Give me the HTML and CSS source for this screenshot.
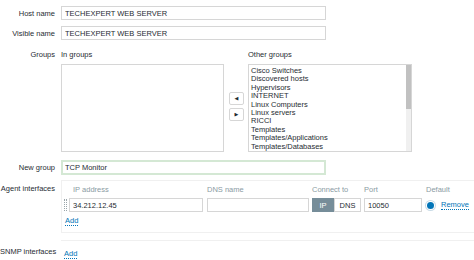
FILE: index.html
```html
<!DOCTYPE html>
<html lang="en">
<head>
    <meta charset="UTF-8">
    <title>Host</title>
    <link rel="stylesheet" href="styles.css">
</head>
<body>
    <div class="form">
        <div class="row first">
            <label class="label">Host name</label>
            <div class="field"><input class="text wide" type="text" value="TECHEXPERT WEB SERVER"></div>
        </div>
        <div class="row">
            <label class="label">Visible name</label>
            <div class="field"><input class="text wide" type="text" value="TECHEXPERT WEB SERVER"></div>
        </div>
        <div class="row groups-row">
            <label class="label top">Groups</label>
            <div class="field groups">
                <div class="group-col">
                    <div class="group-title">In groups</div>
                    <div class="listbox"></div>
                </div>
                <div class="move-btns">
                    <button class="move">&#9664;</button>
                    <button class="move">&#9654;</button>
                </div>
                <div class="group-col">
                    <div class="group-title">Other groups</div>
                    <div class="listbox list-other">
                        <ul class="items">
                            <li>Cisco Switches</li>
                            <li>Discovered hosts</li>
                            <li>Hypervisors</li>
                            <li>INTERNET</li>
                            <li>Linux Computers</li>
                            <li>Linux servers</li>
                            <li>RICCI</li>
                            <li>Templates</li>
                            <li>Templates/Applications</li>
                            <li>Templates/Databases</li>
                        </ul>
                        <div class="scrollbar"><div class="thumb"></div></div>
                    </div>
                </div>
            </div>
        </div>
        <div class="row new-group-row">
            <label class="label">New group</label>
            <div class="field"><input class="text wide focused" type="text" value="TCP Monitor"></div>
        </div>
        <div class="row agent-row">
            <label class="label top">Agent interfaces</label>
            <div class="field iface-box">
                <div class="iface-head">
                    <span class="c-handle"></span>
                    <span class="c-ip head-ip">IP address</span>
                    <span class="c-dns">DNS name</span>
                    <span class="c-conn">Connect to</span>
                    <span class="c-port">Port</span>
                    <span class="c-def">Default</span>
                </div>
                <div class="iface-line">
                    <span class="c-handle handle"></span>
                    <input class="text c-ip" type="text" value="34.212.12.45">
                    <input class="text c-dns" type="text" value="">
                    <span class="c-conn toggle">
                        <span class="seg on">IP</span><span class="seg">DNS</span>
                    </span>
                    <input class="text c-port" type="text" value="10050">
                    <span class="c-def default">
                        <span class="radio"></span>
                        <a class="link">Remove</a>
                    </span>
                </div>
                <a class="link add">Add</a>
            </div>
        </div>
        <div class="row snmp-row">
            <label class="label top">SNMP interfaces</label>
            <div class="field snmp-box">
                <a class="link add">Add</a>
            </div>
        </div>
    </div>
</body>
</html>
```

FILE: styles.css
```css
* {
    box-sizing: border-box;
}
body {
    margin: 0;
    background: #fff;
    font-family: "Liberation Sans", Arial, sans-serif;
    font-size: 7.5px;
    color: #1f2c33;
    overflow: hidden;
    width: 474px;
    height: 260px;
}
.form {
    padding-top: 6px;
}
.row {
    display: grid;
    grid-template-columns: 55px 1fr;
    column-gap: 6px;
    align-items: center;
    margin-top: 6px;
}
.row.first {
    margin-top: 0;
}
.label {
    text-align: right;
    white-space: nowrap;
}
.label.top {
    align-self: start;
}
.text {
    font-family: inherit;
    font-size: 7.5px;
    color: #1f2c33;
    height: 14px;
    border: 1px solid #d6d6d6;
    background: #fff;
    padding: 0 3px;
    margin: 0;
    outline: none;
}
.wide {
    width: 265px;
    display: block;
}
.groups-row {
    margin-top: 10px;
}
.groups {
    display: flex;
    align-items: flex-start;
}
.group-title {
    height: 14px;
    line-height: 9px;
}
.groups-row .label {
    line-height: 9px;
}
.listbox {
    width: 163px;
    height: 88px;
    border: 1px solid #d6d6d6;
    background: #fff;
    position: relative;
}
.move-btns {
    display: flex;
    flex-direction: column;
    gap: 3px;
    margin: 42px 4px 0 5px;
}
.move {
    width: 15px;
    height: 13px;
    padding: 0;
    border: 1px solid #d6d6d6;
    border-radius: 2px;
    background: #fff;
    color: #1f2c33;
    font-size: 5px;
    line-height: 11px;
    font-family: "DejaVu Sans", sans-serif;
}
.list-other {
    width: 164px;
    overflow: hidden;
}
.items {
    list-style: none;
    margin: 0;
    padding: 2px 0 0 2px;
    line-height: 8.4px;
}
.scrollbar {
    position: absolute;
    top: 0;
    right: 0;
    width: 5px;
    height: 100%;
    background: #f0f0f0;
}
.thumb {
    height: 44px;
    background: #c1c1c1;
}
.new-group-row {
    margin-top: 8px;
}
.focused {
    height: 15px;
    border: 2px solid #d4e8d4;
    padding: 0 2px;
}
.agent-row {
    margin-top: 5px;
}
.agent-row .label {
    margin-top: 4px;
}
.iface-box {
    border: 1px solid #f0f0f0;
    border-right: none;
    height: 53px;
    padding: 3px 0 0 1px;
}
.iface-head,
.iface-line {
    display: flex;
    align-items: center;
}
.iface-head {
    height: 11px;
    color: #8a9ba3;
}
.iface-line {
    margin-top: 3px;
    height: 14px;
}
.c-handle {
    width: 6px;
}
.handle {
    height: 12px;
    border-left: 1px dotted #9aa5aa;
    border-right: 1px dotted #9aa5aa;
    width: 3px;
    margin: 0 2px 0 1px;
}
.c-ip {
    width: 134px;
    margin-right: 4px;
}
.head-ip {
    padding-left: 4px;
}
.c-dns {
    width: 102px;
    margin-right: 3px;
}
.c-conn {
    width: 49px;
    margin-right: 3px;
    white-space: nowrap;
}
.c-port {
    width: 58px;
    margin-right: 4px;
}
.c-def {
    white-space: nowrap;
}
.toggle {
    display: flex;
    height: 14px;
}
.seg {
    flex: 1;
    display: flex;
    align-items: center;
    justify-content: center;
    border: 1px solid #d6d6d6;
    background: #fff;
}
.seg.on {
    width: 22px;
    flex: none;
    background: #768d99;
    border-color: #768d99;
    color: #fff;
}
.default {
    display: flex;
    align-items: center;
    gap: 7px;
    padding-left: 1px;
}
.radio {
    width: 7px;
    height: 7px;
    border-radius: 50%;
    background: #0275b8;
    box-shadow: 0 0 0 1px #fff, 0 0 0 2px #c9dbe6;
}
.link {
    color: #0275b8;
    border-bottom: 1px dotted #0275b8;
    line-height: 8px;
    cursor: pointer;
}
.add {
    display: inline-block;
    margin: 5px 0 0 2px;
}
.snmp-row {
    margin-top: 7px;
}
.snmp-box {
    border-top: 1px solid #f0f0f0;
    height: 20px;
    padding: 4px 0 0 1px;
}
.snmp-row .label {
    margin-top: 7px;
}
```
